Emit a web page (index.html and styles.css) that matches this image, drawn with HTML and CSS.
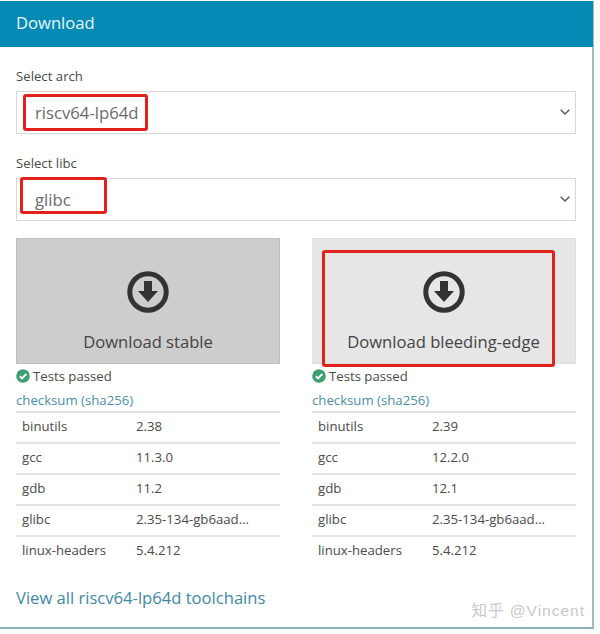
FILE: index.html
```html
<!DOCTYPE html>
<html lang="en">
<head>
<meta charset="utf-8">
<title>Download</title>
<link rel="stylesheet" href="styles.css">
</head>
<body>
<main class="panel">
  <h1 class="panel-head">Download</h1>
  <div class="panel-body">
    <div class="field">
      <div class="field-label">Select arch</div>
      <div class="select">
        <span>riscv64-lp64d</span>
        <svg class="chevron" viewBox="0 0 10 6" width="10" height="6"><path d="M.7.7 5 5 9.3.7" fill="none" stroke="#555" stroke-width="1.4"/></svg>
        <i class="mark mark-arch"></i>
      </div>
    </div>
    <div class="field">
      <div class="field-label">Select libc</div>
      <div class="select">
        <span>glibc</span>
        <svg class="chevron" viewBox="0 0 10 6" width="10" height="6"><path d="M.7.7 5 5 9.3.7" fill="none" stroke="#555" stroke-width="1.4"/></svg>
        <i class="mark mark-libc"></i>
      </div>
    </div>
    <div class="columns">
      <section class="column">
        <a class="dl dl-stable">
          <svg class="dl-icon" viewBox="0 0 42 42" width="42" height="42"><circle cx="21" cy="21" r="18.2" fill="none" stroke="#333" stroke-width="5"/><path d="M17 10h8v10h6L21 31 11 20h6z" fill="#333"/></svg>
          <span class="dl-text">Download stable</span>
        </a>
        <div class="status"><svg viewBox="0 0 14 14" width="14" height="14"><circle cx="7" cy="7" r="6.8" fill="#3c9f6f"/><path d="M3.8 7.2 6.1 9.4 10.3 5" fill="none" stroke="#fff" stroke-width="2"/></svg>Tests passed</div>
        <a class="checksum">checksum (sha256)</a>
        <table class="versions">
          <tr><td>binutils</td><td>2.38</td></tr>
          <tr><td>gcc</td><td>11.3.0</td></tr>
          <tr><td>gdb</td><td>11.2</td></tr>
          <tr><td>glibc</td><td>2.35-134-gb6aad...</td></tr>
          <tr><td>linux-headers</td><td>5.4.212</td></tr>
        </table>
      </section>
      <section class="column">
        <a class="dl dl-edge">
          <svg class="dl-icon" viewBox="0 0 42 42" width="42" height="42"><circle cx="21" cy="21" r="18.2" fill="none" stroke="#333" stroke-width="5"/><path d="M17 10h8v10h6L21 31 11 20h6z" fill="#333"/></svg>
          <span class="dl-text">Download bleeding-edge</span>
          <i class="mark mark-edge"></i>
        </a>
        <div class="status"><svg viewBox="0 0 14 14" width="14" height="14"><circle cx="7" cy="7" r="6.8" fill="#3c9f6f"/><path d="M3.8 7.2 6.1 9.4 10.3 5" fill="none" stroke="#fff" stroke-width="2"/></svg>Tests passed</div>
        <a class="checksum">checksum (sha256)</a>
        <table class="versions">
          <tr><td>binutils</td><td>2.39</td></tr>
          <tr><td>gcc</td><td>12.2.0</td></tr>
          <tr><td>gdb</td><td>12.1</td></tr>
          <tr><td>glibc</td><td>2.35-134-gb6aad...</td></tr>
          <tr><td>linux-headers</td><td>5.4.212</td></tr>
        </table>
      </section>
    </div>
    <a class="view-all">View all riscv64-lp64d toolchains</a>
  </div>
  <div class="watermark">知乎 @Vincent</div>
</main>
</body>
</html>
```
FILE: styles.css
```css
* { box-sizing: border-box; }
html, body { margin: 0; height: 100%; }
body {
  background: #fbfdfc;
  font-family: "Open Sans", "Noto Sans CJK SC", sans-serif;
  color: #444;
  overflow: hidden;
}
.panel {
  position: relative;
  width: 594px;
  height: 628px;
  background: #fff;
  border-right: 2px solid #9fbfc8;
  border-bottom: 2px solid #8fb0b8;
}
.panel-head {
  margin: 1px -1px 0 0;
  height: 46px;
  padding-left: 16px;
  background: #058ab6;
  color: #eaf6fa;
  font-size: 16.6px;
  font-weight: 400;
  line-height: 44px;
}
.panel-body { padding: 19px 16px 0; width: 592px; }
.field { margin-bottom: 19px; }
.field + .field { margin-bottom: 17px; }
.field-label {
  font-size: 13.2px;
  line-height: 20px;
  margin-bottom: 5px;
  color: #4a4a4a;
}
.select {
  position: relative;
  display: flex;
  align-items: center;
  justify-content: space-between;
  height: 43px;
  width: 560px;
  padding: 0 5px 1px 18px;
  border: 1px solid #d9d9d9;
  font-size: 16.7px;
  color: #6a6a6a;
}
.mark {
  position: absolute;
  display: block;
  border: 3px solid #e3211c;
  border-radius: 3px;
}
.mark-arch { left: 6px; top: 2px; width: 125px; height: 37px; }
.mark-libc { left: 3px; top: -2px; width: 87px; height: 37px; }
.mark-edge { left: 10px; top: 11px; width: 233px; height: 117px; }
.columns {
  display: grid;
  grid-template-columns: 264px 264px;
  column-gap: 32px;
}
.dl {
  position: relative;
  display: flex;
  flex-direction: column;
  align-items: center;
  height: 126px;
  padding-top: 32px;
  font-size: 16.6px;
  color: #444;
  border: 1px solid #c4c4c4;
  border-width: 1px 1px 1px 0;
}
.dl-stable { background: #cdcdcd; border-color: #bdbdbd; border-left-width: 1px; }
.dl-edge { background: #e6e6e6; border-color: #dedede; }
.dl-icon { display: block; }
.dl-text { margin-top: 17px; line-height: 24px; white-space: nowrap; }
.status {
  display: flex;
  align-items: center;
  gap: 3px;
  height: 26px;
  padding-bottom: 2px;
  font-size: 13.2px;
  color: #4a4a4a;
}
.checksum {
  display: block;
  font-size: 13.2px;
  line-height: 20px;
  color: #4a8fa8;
}
.versions {
  width: 100%;
  border-collapse: collapse;
  margin-top: 1px;
  font-size: 13.2px;
  color: #4a4a4a;
  table-layout: fixed;
}
.versions tr { height: 31px; }
.versions tr:last-child { height: 30px; }
.versions td { padding: 0 0 3px 6px; border-top: 2px solid #e4e4e4; white-space: nowrap; }
.versions td:first-child { width: 114px; }
.view-all {
  display: block;
  margin-top: 19px;
  font-size: 16.6px;
  line-height: 26px;
  color: #4089a6;
}
.watermark {
  position: absolute;
  right: 7px;
  bottom: 7px;
  font-family: "Liberation Sans", "Noto Sans CJK SC", sans-serif;
  font-size: 15.5px;
  letter-spacing: 1px;
  color: #c8c8c8;
  white-space: nowrap;
}
```
